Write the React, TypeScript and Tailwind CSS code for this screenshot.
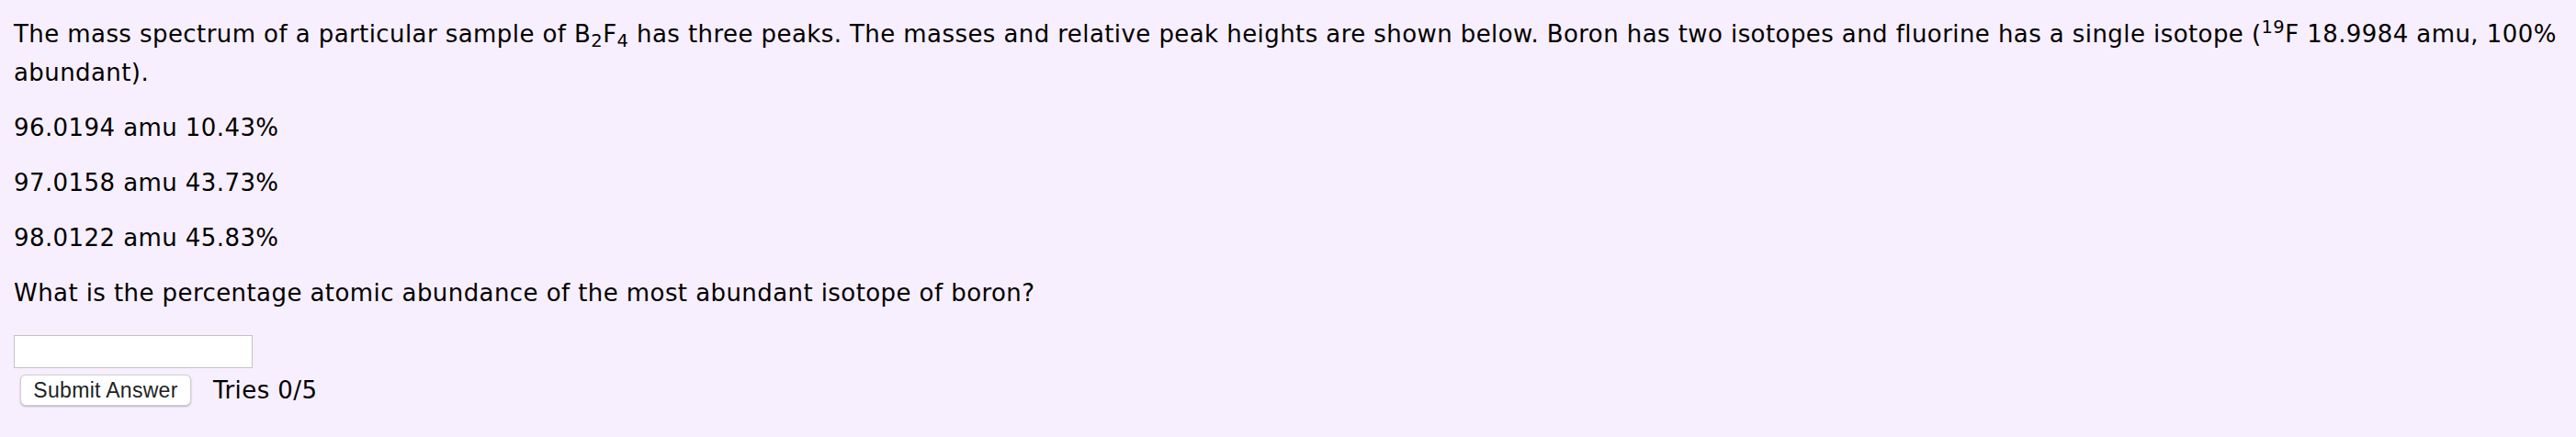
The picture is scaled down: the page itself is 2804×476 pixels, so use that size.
import React from "react";

export default function App() {
  return (
    <div
      className="w-[2804px] h-[476px] bg-[#f7effd] text-black pl-[15px] pt-[16px] overflow-hidden"
      style={{ fontFamily: '"DejaVu Sans", Verdana, sans-serif' }}
    >
      <div className="flex flex-col gap-[18px] text-[26px] leading-[42px] tracking-[0.42px]">
        <p>
          The mass spectrum of a particular sample of B<sub>2</sub>F<sub>4</sub> has three peaks. The masses and
          relative peak heights are shown below. Boron has two isotopes and fluorine has a single isotope (
          <sup>19</sup>F 18.9984 amu, 100% abundant).
        </p>
        <p>96.0194 amu 10.43%</p>
        <p>97.0158 amu 43.73%</p>
        <p>98.0122 amu 45.83%</p>
        <p>What is the percentage atomic abundance of the most abundant isotope of boron?</p>
      </div>
      <div className="mt-[25px]">
        <input
          type="text"
          className="block w-[260px] h-[36px] bg-white border border-[#c3c3c3] outline-none"
        />
        <div className="flex items-center mt-[3px] text-[26px] leading-[42px] tracking-[0.42px]">
          <button
            className="ml-[7px] w-[186px] h-[34px] bg-white border border-[#cfcfcf] rounded-[6px] shadow-[0_1px_2px_rgba(0,0,0,0.25)] text-[23px] text-[#222] leading-none tracking-[0.3px] flex items-center justify-center"
            style={{ fontFamily: '"Liberation Sans", Arial, sans-serif' }}
          >
            Submit Answer
          </button>
          <span className="ml-[24px]">Tries 0/5</span>
        </div>
      </div>
    </div>
  );
}
